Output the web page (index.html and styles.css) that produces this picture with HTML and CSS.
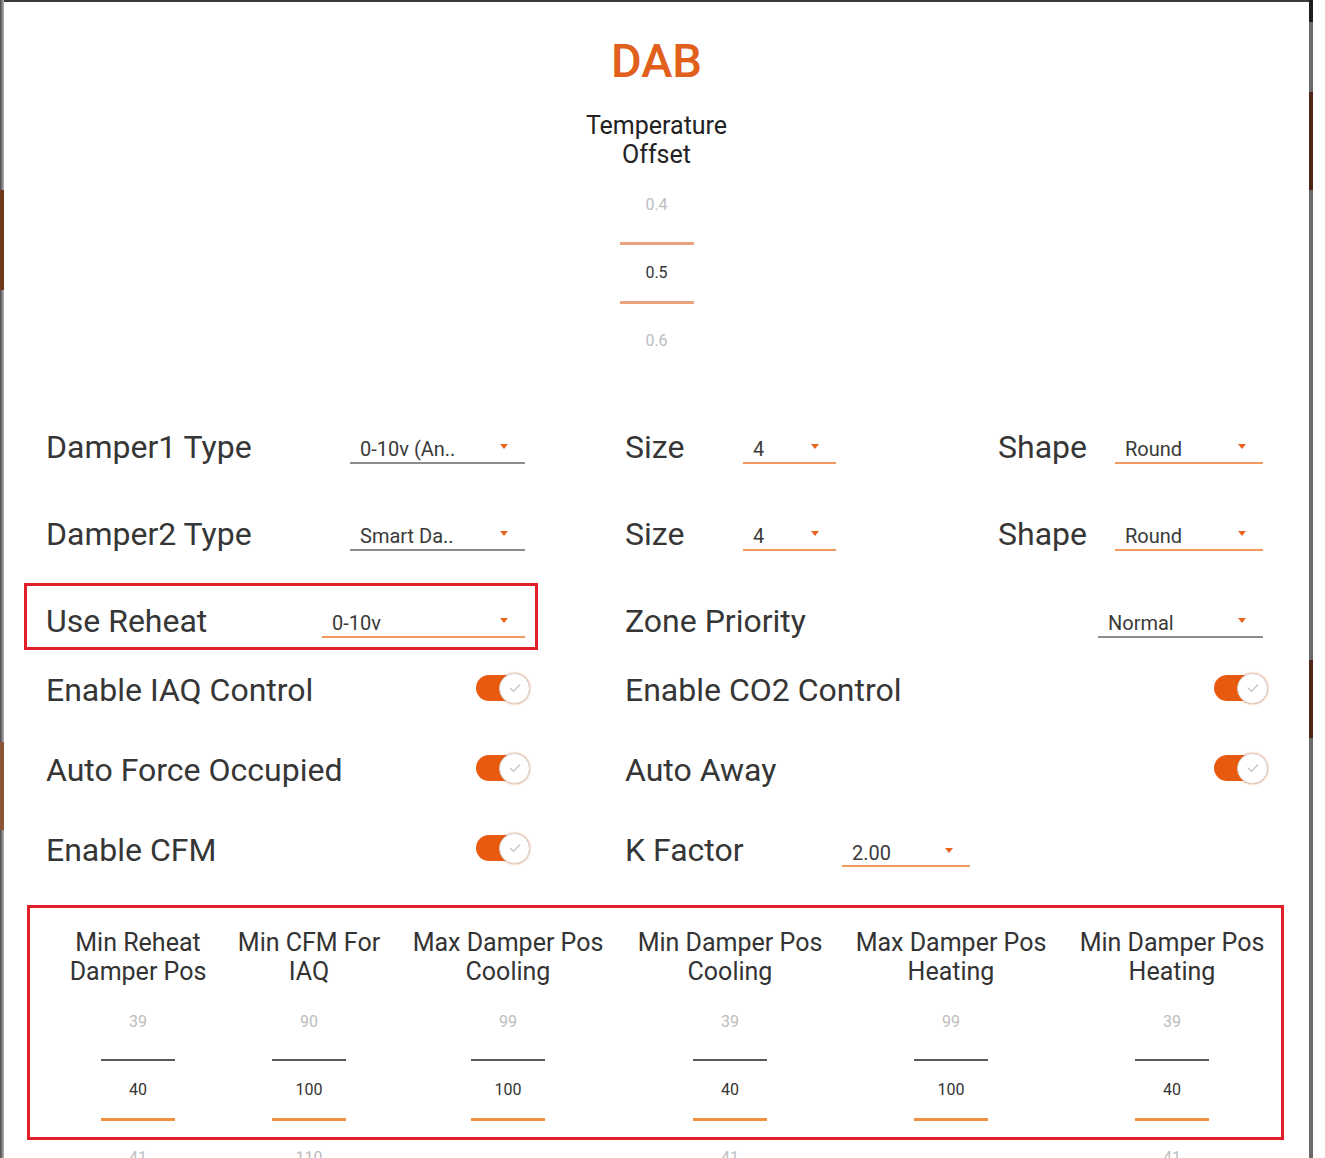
FILE: index.html
```html
<!DOCTYPE html>
<html lang="en">
<head>
    <meta charset="UTF-8">
    <meta name="viewport" content="width=device-width, initial-scale=1.0">
    <title>DAB</title>
    <link rel="stylesheet" href="styles.css">
</head>
<body>
<div class="frame">
    <div class="edge edge-left"></div>

    <div class="panel">
        <div class="title">DAB</div>

        <div class="offset">
            <div class="offset-label">Temperature<br>Offset</div>
            <div class="picker">
                <div class="pick">0.4</div>
                <div class="pick-line"></div>
                <div class="pick current">0.5</div>
                <div class="pick-line lower"></div>
                <div class="pick">0.6</div>
            </div>
        </div>

        <div class="form">
            <div class="row">
                <div class="cell">
                    <span class="label">Damper1 Type</span>
                    <div class="select type muted"><span>0-10v (An..</span><i class="caret"></i></div>
                </div>
                <div class="cell dims">
                    <span class="label">Size</span>
                    <div class="select"><span>4</span><i class="caret"></i></div>
                    <span></span>
                    <span class="label">Shape</span>
                    <div class="select"><span>Round</span><i class="caret"></i></div>
                </div>
            </div>

            <div class="row">
                <div class="cell">
                    <span class="label">Damper2 Type</span>
                    <div class="select type muted"><span>Smart Da..</span><i class="caret"></i></div>
                </div>
                <div class="cell dims">
                    <span class="label">Size</span>
                    <div class="select"><span>4</span><i class="caret"></i></div>
                    <span></span>
                    <span class="label">Shape</span>
                    <div class="select"><span>Round</span><i class="caret"></i></div>
                </div>
            </div>

            <div class="row">
                <div class="cell reheat">
                    <span class="label">Use Reheat</span>
                    <div class="select wide"><span>0-10v</span><i class="caret"></i></div>
                </div>
                <div class="cell">
                    <span class="label">Zone Priority</span>
                    <div class="select priority muted"><span>Normal</span><i class="caret"></i></div>
                </div>
            </div>

            <div class="row toggles">
                <div class="cell">
                    <span class="label">Enable IAQ Control</span>
                    <div class="switch"><div class="knob"><svg viewBox="0 0 12 10" width="12" height="10"><path d="M1 5 L4.5 8.5 L11 1.5" fill="none" stroke="#c2c2c2" stroke-width="1.2"/></svg></div></div>
                </div>
                <div class="cell">
                    <span class="label">Enable CO2 Control</span>
                    <div class="switch"><div class="knob"><svg viewBox="0 0 12 10" width="12" height="10"><path d="M1 5 L4.5 8.5 L11 1.5" fill="none" stroke="#c2c2c2" stroke-width="1.2"/></svg></div></div>
                </div>
            </div>

            <div class="row toggles">
                <div class="cell">
                    <span class="label">Auto Force Occupied</span>
                    <div class="switch"><div class="knob"><svg viewBox="0 0 12 10" width="12" height="10"><path d="M1 5 L4.5 8.5 L11 1.5" fill="none" stroke="#c2c2c2" stroke-width="1.2"/></svg></div></div>
                </div>
                <div class="cell">
                    <span class="label">Auto Away</span>
                    <div class="switch"><div class="knob"><svg viewBox="0 0 12 10" width="12" height="10"><path d="M1 5 L4.5 8.5 L11 1.5" fill="none" stroke="#c2c2c2" stroke-width="1.2"/></svg></div></div>
                </div>
            </div>

            <div class="row toggles">
                <div class="cell">
                    <span class="label">Enable CFM</span>
                    <div class="switch"><div class="knob"><svg viewBox="0 0 12 10" width="12" height="10"><path d="M1 5 L4.5 8.5 L11 1.5" fill="none" stroke="#c2c2c2" stroke-width="1.2"/></svg></div></div>
                </div>
                <div class="cell kfactor">
                    <span class="label">K Factor</span>
                    <div class="select kf"><span>2.00</span><i class="caret"></i></div>
                </div>
            </div>
        </div>

        <div class="limits">
            <div class="limit">
                <div class="limit-label">Min Reheat<br>Damper Pos</div>
                <div class="picker">
                    <div class="pick">39</div>
                    <div class="pick-line grey"></div>
                    <div class="pick current">40</div>
                    <div class="pick-line lower"></div>
                    <div class="pick">41</div>
                </div>
            </div>
            <div class="limit">
                <div class="limit-label">Min CFM For<br>IAQ</div>
                <div class="picker">
                    <div class="pick">90</div>
                    <div class="pick-line grey"></div>
                    <div class="pick current">100</div>
                    <div class="pick-line lower"></div>
                    <div class="pick">110</div>
                </div>
            </div>
            <div class="limit">
                <div class="limit-label">Max Damper Pos<br>Cooling</div>
                <div class="picker">
                    <div class="pick">99</div>
                    <div class="pick-line grey"></div>
                    <div class="pick current">100</div>
                    <div class="pick-line lower"></div>
                    <div class="pick"></div>
                </div>
            </div>
            <div class="limit">
                <div class="limit-label">Min Damper Pos<br>Cooling</div>
                <div class="picker">
                    <div class="pick">39</div>
                    <div class="pick-line grey"></div>
                    <div class="pick current">40</div>
                    <div class="pick-line lower"></div>
                    <div class="pick">41</div>
                </div>
            </div>
            <div class="limit">
                <div class="limit-label">Max Damper Pos<br>Heating</div>
                <div class="picker">
                    <div class="pick">99</div>
                    <div class="pick-line grey"></div>
                    <div class="pick current">100</div>
                    <div class="pick-line lower"></div>
                    <div class="pick"></div>
                </div>
            </div>
            <div class="limit">
                <div class="limit-label">Min Damper Pos<br>Heating</div>
                <div class="picker">
                    <div class="pick">39</div>
                    <div class="pick-line grey"></div>
                    <div class="pick current">40</div>
                    <div class="pick-line lower"></div>
                    <div class="pick">41</div>
                </div>
            </div>
        </div>
    </div>

    <div class="edge edge-right"></div>
</div>
</body>
</html>
```

FILE: styles.css
```css
body {
    margin: 0;
    background-color: #fff;
    font-family: Roboto, "Noto Sans", sans-serif;
    color: #333;
}
.frame {
    display: flex;
    width: 1313px;
    height: 1158px;
    overflow: hidden;
}
.edge {
    width: 4px;
    flex-shrink: 0;
}
.edge-left {
    background:
        linear-gradient(to bottom, transparent 190px, #70381a 190px, #70381a 290px, transparent 290px,
            transparent 742px, #8b5434 742px, #8b5434 830px, transparent 830px),
        linear-gradient(to right, #474747, #b5b5b5);
}
.edge-right {
    background: linear-gradient(to bottom, #1e1e1e 0, #1e1e1e 22px, #6a6a6a 22px, #6a6a6a 92px,
        #4b2612 92px, #4b2612 190px, #6a6a6a 190px, #6a6a6a 660px,
        #4b2612 660px, #4b2612 738px, #6a6a6a 738px);
}
.panel {
    flex: 1;
    border-top: 2px solid #3c3c3c;
}

/* header */
.title {
    margin-top: 33px;
    text-align: center;
    font-size: 47px;
    line-height: 52px;
    font-weight: 500;
    color: #e0601c;
}
.offset {
    margin-top: 24px;
    display: flex;
    flex-direction: column;
    align-items: center;
}
.offset-label {
    font-size: 25px;
    line-height: 29px;
    text-align: center;
    color: #222;
}

/* number wheels */
.picker {
    display: flex;
    flex-direction: column;
    align-items: center;
}
.offset .picker {
    margin-top: 22px;
}
.pick {
    height: 28px;
    line-height: 28px;
    font-size: 16px;
    color: #bdbdbd;
}
.pick.current {
    color: #333;
}
.pick-line {
    width: 74px;
    height: 3px;
    margin: 23px 0 14px;
    background-color: #eba37e;
}
.pick-line.lower {
    margin: 14px 0 23px;
}
.pick-line.grey {
    height: 2px;
    margin-bottom: 15px;
    background-color: #5a5a5a;
}
.limits .pick-line.lower {
    background-color: #f0913f;
}

/* settings rows */
.form {
    margin-top: 48px;
    padding: 0 41px 0 42px;
}
.row {
    display: grid;
    grid-template-columns: 484px 1fr;
    column-gap: 95px;
    height: 87px;
}
.row.toggles {
    height: 52px;
}
.row.toggles + .row.toggles {
    margin-top: 28px;
}
.cell {
    display: flex;
    align-items: center;
    justify-content: space-between;
}
.cell.dims {
    display: grid;
    grid-template-columns: 118px 93px 162px 117px 148px;
    justify-content: start;
    align-items: center;
}
.cell.kfactor {
    justify-content: flex-start;
}
.kfactor .label {
    width: 217px;
}
.cell.reheat {
    position: relative;
}
.cell.reheat::after {
    content: "";
    position: absolute;
    left: -22px;
    right: -8px;
    top: 6px;
    bottom: 14px;
    border: 3px solid #e11f28;
}
.label {
    font-size: 32px;
    line-height: 38px;
    color: #363636;
    white-space: nowrap;
}

/* dropdowns */
.select {
    display: flex;
    align-items: center;
    justify-content: space-between;
    box-sizing: border-box;
    height: 27px;
    margin-top: 7px;
    padding: 0 17px 0 10px;
    border-bottom: 2px solid #f19a60;
    font-size: 20px;
    color: #3a3a3a;
    white-space: nowrap;
}
.select.muted {
    border-bottom-color: #8c8c8c;
}
.select.type {
    width: 175px;
    margin-right: 5px;
}
.select.wide {
    width: 203px;
    margin-right: 5px;
}
.select.priority {
    width: 165px;
    margin-right: 5px;
}
.select.kf {
    width: 128px;
}
.caret {
    width: 0;
    height: 0;
    margin-top: -5px;
    border-left: 4.5px solid transparent;
    border-right: 4.5px solid transparent;
    border-top: 5px solid #e8651f;
}

/* switches */
.switch {
    display: flex;
    align-items: center;
    justify-content: flex-end;
    width: 50px;
    height: 26px;
    margin: -4px 4px 0 0;
    border-radius: 13px;
    background-color: #e85a10;
}
.knob {
    display: flex;
    align-items: center;
    justify-content: center;
    flex-shrink: 0;
    box-sizing: border-box;
    width: 31px;
    height: 31px;
    margin-right: -4px;
    border-radius: 50%;
    border: 1px solid #d6d6d6;
    background-color: #fff;
    box-shadow: 0 0 2px rgba(232, 90, 16, 0.7);
}

/* damper limit wheels */
.limits {
    position: relative;
    display: grid;
    grid-template-columns: 138px 138px 194px 184px 192px 184px;
    column-gap: 33px;
    margin: 52px 0 0 65px;
}
.limits::after {
    content: "";
    position: absolute;
    left: -42px;
    right: 25px;
    top: -23px;
    height: 235px;
    box-sizing: border-box;
    border: 3px solid #e11f28;
}
.limit {
    display: flex;
    flex-direction: column;
    align-items: center;
}
.limit-label {
    font-size: 25px;
    line-height: 29px;
    text-align: center;
    white-space: nowrap;
    color: #333;
}
.limit .picker {
    margin-top: 22px;
}
```
